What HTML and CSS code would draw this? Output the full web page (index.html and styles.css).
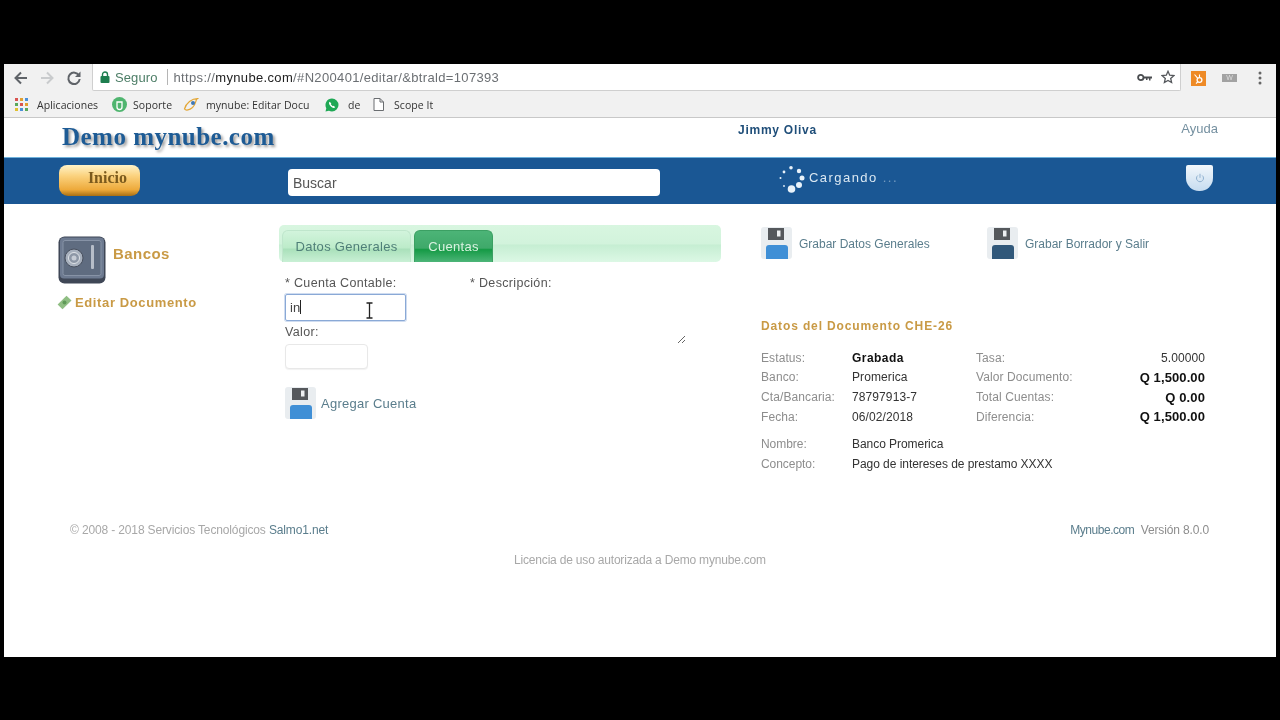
FILE: index.html
```html
<!DOCTYPE html>
<html lang="es">
<head>
<meta charset="utf-8">
<title>mynube: Editar Documento</title>
<link rel="stylesheet" href="styles.css">
</head>
<body>
<svg class="defs" width="0" height="0" aria-hidden="true">
  <symbol id="floppy" viewBox="0 0 31 32">
    <path d="M3 0h25a3 3 0 0 1 3 3v26a3 3 0 0 1-3 3H3a3 3 0 0 1-3-3V3a3 3 0 0 1 3-3z" fill="#e9edf0"/>
    <path d="M7 1h16v12H7z" fill="#55585c"/>
    <path d="M16 3.500h3.500v6H16z" fill="#eef0f2"/>
    <path d="M5 32V21a3 3 0 0 1 3-3h16a3 3 0 0 1 3 3v11z" fill="currentColor"/>
  </symbol>
</svg>
<div class="window">
  <div class="toolbar">
    <svg class="tb-icon" width="16" height="16" viewBox="0 0 16 16"><path d="M14 8H3M8 2.500 2.500 8 8 13.500" fill="none" stroke="#5f6368" stroke-width="2"/></svg>
    <svg class="tb-icon fwd" width="16" height="16" viewBox="0 0 16 16"><path d="M2 8h11M8 2.500 13.500 8 8 13.500" fill="none" stroke="#c9cbcd" stroke-width="2"/></svg>
    <svg class="tb-icon reload" width="16" height="16" viewBox="0 0 16 16"><path d="M13 5.500A5.700 5.700 0 1 0 13.700 9" fill="none" stroke="#5f6368" stroke-width="2"/><path d="M14.500 1.500v5.500H9z" fill="#5f6368"/></svg>
    <div class="omnibox">
      <svg class="lock" width="10" height="12" viewBox="0 0 10 12"><path d="M2.500 5V3.500a2.500 2.500 0 0 1 5 0V5" fill="none" stroke="#1e7e4f" stroke-width="1.400"/><rect x="0.500" y="5" width="9" height="7" rx="1" fill="#1e7e4f"/></svg>
      <span class="secure">Seguro</span>
      <span class="sep"></span>
      <span class="url">https://<b>mynube.com</b>/#N200401/editar/&amp;btrald=107393</span>
      <svg class="key" width="15" height="9" viewBox="0 0 15 9"><circle cx="3.800" cy="4.500" r="2.700" fill="none" stroke="#4a4d50" stroke-width="1.800"/><path d="M6.500 3.500H15v2h-1.500v2H12v-2h-1.500v1.500H9V5.500H6.500z" fill="#4a4d50"/></svg>
      <svg class="star" width="14" height="14" viewBox="0 0 14 14"><path d="m7 1.300 1.700 3.900 4.200.4-3.200 2.800.9 4.100L7 10.400l-3.600 2.100.9-4.100L1.100 5.600l4.200-.4z" fill="none" stroke="#55585c" stroke-width="1.300"/></svg>
    </div>
    <svg class="ext-hub" width="15" height="15" viewBox="0 0 15 15"><rect width="15" height="15" fill="#ee8a26"/><circle cx="8.500" cy="9" r="2.400" fill="none" stroke="#fff" stroke-width="1.300"/><path d="M8.500 3.500v3M3.500 3.500l3.300 3.800M5 12.500l1.800-1.700" stroke="#fff" stroke-width="1.100"/></svg>
    <span class="ext-grey">W</span>
    <svg class="dots" width="4" height="14" viewBox="0 0 4 14"><circle cx="2" cy="2" r="1.500" fill="#666"/><circle cx="2" cy="7" r="1.500" fill="#666"/><circle cx="2" cy="12" r="1.500" fill="#666"/></svg>
  </div>
  <div class="bookmarks">
    <svg class="bm-apps" width="13" height="13" viewBox="0 0 13 13"><rect width="3" height="3" fill="#d9534f"/><rect x="5" width="3" height="3" fill="#e0a030"/><rect x="10" width="3" height="3" fill="#4a90d9"/><rect y="5" width="3" height="3" fill="#5aa85a"/><rect x="5" y="5" width="3" height="3" fill="#d9534f"/><rect x="10" y="5" width="3" height="3" fill="#e0a030"/><rect y="10" width="3" height="3" fill="#e0c030"/><rect x="5" y="10" width="3" height="3" fill="#4a90d9"/><rect x="10" y="10" width="3" height="3" fill="#5aa85a"/></svg>
    <span class="bm bm-aplic">Aplicaciones</span>
    <svg class="bm-ic soporte-ic" width="15" height="15" viewBox="0 0 15 15"><circle cx="7.500" cy="7.500" r="7.500" fill="#4fb56f"/><path d="M5 5h5v5a2.500 2.500 0 0 1-5 0z" fill="none" stroke="#fff" stroke-width="1.300"/></svg>
    <span class="bm bm-soporte">Soporte</span>
    <svg class="bm-ic orbit-ic" width="16" height="16" viewBox="0 0 16 16"><path d="M1.500 12C3 6 9 1.500 14.500 1.500 12 3 13.500 7 9.500 10.500 6.500 13 3 14 1.500 12z" fill="none" stroke="#e3a635" stroke-width="1.200"/><circle cx="10" cy="6" r="2" fill="#3f78b5"/></svg>
    <span class="bm bm-mynube">mynube: Editar Docu</span>
    <svg class="bm-ic wa-ic" width="14" height="14" viewBox="0 0 14 14"><path d="M7 .5a6.500 6.500 0 0 1 0 13 6.400 6.400 0 0 1-3-.7L.5 13.500l.8-3.300A6.500 6.500 0 0 1 7 .5z" fill="#1fa855"/><path d="M4.500 3.800c-1 1.200-.5 2.800 1.200 4.500s3.300 2.200 4.500 1l-1.500-1.500-1 .5L5.800 6.300l.5-1z" fill="#fff"/></svg>
    <span class="bm bm-de">de</span>
    <svg class="bm-ic doc-ic" width="11" height="13" viewBox="0 0 11 13"><path d="M1 .5h6l3.500 3.500v8.500H1zM7 .5V4h3.500" fill="#fff" stroke="#6a6d70"/></svg>
    <span class="bm bm-scope">Scope It</span>
  </div>

  <div class="page">
    <header class="head">
      <h1 class="logo">Demo mynube.com</h1>
      <span class="user">Jimmy Oliva</span>
      <a class="help">Ayuda</a>
    </header>
    <nav class="nav">
      <a class="home">Inicio</a>
      <input class="search" placeholder="Buscar">
      <div class="loading">
        <svg class="spinner" width="26" height="26" viewBox="0 0 26 26" fill="#e8f2fa">
          <circle cx="12.500" cy="23" r="3.800"/><circle cx="20" cy="19" r="3"/><circle cx="23" cy="12" r="2.500"/><circle cx="20" cy="5" r="2.200"/><circle cx="12" cy="1.800" r="1.800"/><circle cx="5" cy="6" r="1.400"/><circle cx="1.500" cy="12" r="1"/><circle cx="5" cy="20" r=".9"/>
        </svg>
        <span class="loading-text">Cargando <i>...</i></span>
      </div>
      <a class="power">
        <svg width="10" height="10" viewBox="0 0 10 10"><path d="M2.800 2.500a3.500 3.500 0 1 0 4.400 0M5 .8v4" fill="none" stroke="#8fb0cf" stroke-width="1"/></svg>
      </a>
    </nav>

    <main class="content">
      <aside class="side">
        <div class="module">
          <svg width="48" height="48" viewBox="0 0 48 48">
            <rect x="0.500" y="0.500" width="47" height="47" rx="6" fill="#3f4756"/>
            <rect x="2" y="1.500" width="44" height="41" rx="4" fill="#6d7a90"/>
            <rect x="5" y="4.500" width="38" height="35" rx="2" fill="#5f6c80" stroke="#8793a6"/>
            <circle cx="16" cy="22" r="9" fill="#a7b0bd" stroke="#48505e"/>
            <circle cx="16" cy="22" r="5.500" fill="#8d97a6" stroke="#dfe3e8"/>
            <circle cx="16" cy="22" r="2.500" fill="#c6ccd5"/>
            <rect x="33" y="9" width="3" height="24" rx="1" fill="#b6bdc8"/>
          </svg>
          <span class="module-name">Bancos</span>
        </div>
        <div class="crumb">
          <svg width="15" height="15" viewBox="0 0 15 15"><path d="M9.500.8 14.500 5.500 5.500 14.300.6 9.500z" fill="#8fbe83"/><circle cx="7.500" cy="7.500" r="2" fill="#5f9a58"/></svg>
          <span>Editar Documento</span>
        </div>
      </aside>

      <section class="work">
        <div class="tabs">
          <a class="tab">Datos Generales</a>
          <a class="tab active">Cuentas</a>
        </div>
        <div class="form">
          <div class="form-left">
            <label class="lbl">* Cuenta Contable:</label>
            <div class="field-focus">in<span class="caret"></span>
              <svg class="ibeam" width="9" height="17" viewBox="0 0 9 17"><path d="M1.500 1h6M4.500 1v15M1.500 16h6" fill="none" stroke="#222" stroke-width="1.300"/></svg>
            </div>
            <label class="lbl lbl-valor">Valor:</label>
            <input class="field-small">
            <a class="save add">
              <svg class="floppy blue" width="31" height="32"><use href="#floppy"/></svg>
              <span>Agregar Cuenta</span>
            </a>
          </div>
          <div class="form-right">
            <label class="lbl">* Descripción:</label>
            <textarea class="desc"></textarea>
          </div>
        </div>
      </section>

      <section class="info">
        <div class="actions">
          <a class="save act1">
            <svg class="floppy blue" width="31" height="32"><use href="#floppy"/></svg>
            <span>Grabar Datos Generales</span>
          </a>
          <a class="save">
            <svg class="floppy navy" width="31" height="32"><use href="#floppy"/></svg>
            <span>Grabar Borrador y Salir</span>
          </a>
        </div>
        <h2 class="doc-title">Datos del Documento CHE-26</h2>
        <div class="doc-grid">
          <span class="k">Estatus:</span><strong class="v status">Grabada</strong><span class="k">Tasa:</span><span class="v num">5.00000</span>
          <span class="k">Banco:</span><span class="v">Promerica</span><span class="k">Valor Documento:</span><strong class="v num">Q 1,500.00</strong>
          <span class="k">Cta/Bancaria:</span><span class="v">78797913-7</span><span class="k">Total Cuentas:</span><strong class="v num">Q 0.00</strong>
          <span class="k">Fecha:</span><span class="v">06/02/2018</span><span class="k">Diferencia:</span><strong class="v num">Q 1,500.00</strong>
        </div>
        <div class="doc-notes">
          <span class="k">Nombre:</span><span class="v">Banco Promerica</span>
          <span class="k">Concepto:</span><span class="v">Pago de intereses de prestamo XXXX</span>
        </div>
      </section>
    </main>

    <footer class="foot">
      <div class="foot-row">
        <span>© 2008 - 2018 Servicios Tecnológicos <a>Salmo1.net</a></span>
        <span><a class="brand">Mynube.com</a>&nbsp; Versión 8.0.0</span>
      </div>
      <div class="license">Licencia de uso autorizada a Demo mynube.com</div>
    </footer>
  </div>
</div>
</body>
</html>
```
FILE: styles.css
```css
* { box-sizing: border-box; }
html, body { margin: 0; height: 100%; background: #000; overflow: hidden; }
body { font-family: "Liberation Sans", Arial, sans-serif; font-size: 12px; color: #555; }
.defs { display: block; height: 0; }
a { color: inherit; text-decoration: none; }

.window {
  width: 1272px; height: 593px; margin: 64px 4px 0;
  display: flex; flex-direction: column; background: #fff;
  filter: blur(.4px);
}

/* browser chrome */
.toolbar {
  height: 28px; flex: none; display: flex; align-items: center;
  background: #f1f1f1; padding-left: 9px;
}
.tb-icon { flex: none; }
.fwd { margin-left: 10px; }
.reload { margin-left: 11px; }
.omnibox {
  width: 1089px; height: 27px; margin-left: 10px; flex: none; align-self: flex-start;
  display: flex; align-items: center; background: #fff;
  border: 1px solid #cfcfcf; border-top: 0; border-radius: 0 0 2px 2px;
  padding: 0 5px 0 7px; font-family: "Liberation Sans", Arial, sans-serif; font-size: 13px;
}
.secure { margin-left: 5px; color: #4d7e67; letter-spacing: .1px; }
.sep { width: 1px; height: 16px; background: #b5b5b5; margin: 0 6px 0 9px; }
.url { color: #6b6f73; letter-spacing: .34px; flex: 1; }
.url b { font-weight: 400; color: #222; }
.key { margin-right: 9px; }
.ext-hub { margin-left: 10px; flex: none; }
.ext-grey {
  width: 15px; height: 8px; margin-left: 16px; background: #a2a2a2; color: #ddd;
  font-size: 7px; line-height: 8px; text-align: center; flex: none;
}
.dots { margin-left: 21px; flex: none; }

.bookmarks {
  height: 26px; flex: none; display: flex; align-items: center;
  background: #f1f1f1; border-bottom: 1px solid #c8c8c8; padding-left: 11px;
  font-family: "Open Sans", "Liberation Sans", sans-serif; font-size: 10.500px; color: #333;
  letter-spacing: .05px;
}
.bm { white-space: nowrap; }
.bm-aplic { margin-left: 9px; width: 64px; }
.soporte-ic { margin-left: 11px; }
.bm-soporte { margin-left: 6px; width: 39px; }
.orbit-ic { margin-left: 11px; }
.bm-mynube { margin-left: 7px; width: 104px; overflow: hidden; }
.wa-ic { margin-left: 15px; }
.bm-de { margin-left: 9px; width: 12px; }
.doc-ic { margin-left: 13px; }
.bm-scope { margin-left: 10px; }

/* page */
.page { flex: 1; min-height: 0; display: flex; flex-direction: column; background: #fff; }
.head { height: 39px; flex: none; display: flex; padding-left: 58px; }
.logo {
  width: 676px; margin: 4px 0 0; font: 700 25px/30px "Liberation Serif", serif;
  color: #1d5b95; letter-spacing: .48px; text-shadow: 2px 2px 3px #9a9a9a;
}
.user { flex: 1; padding-top: 5px; font-size: 12px; font-weight: 700; color: #1f4e79; line-height: 14px; letter-spacing: .75px; }
.help { margin-right: 58px; padding-top: 3px; font-size: 13px; line-height: 15px; color: #7590a0; }

.nav {
  height: 47px; flex: none; display: flex; align-items: flex-start;
  background: #1a5794; border-top: 1px solid #6fb2dc;
}
.home {
  width: 81px; height: 31px; margin: 7px 0 0 55px; flex: none; border-radius: 8px 8px 9px 9px;
  background: linear-gradient(#fff3c8 0, #fbd27e 35%, #eda93a 80%, #a86f14 100%);
  font: 700 16px/25px "Liberation Serif", serif; color: #7b5a1d; text-align: right; padding-right: 13px;
}
.search {
  width: 372px; height: 27px; margin: 11px 0 0 148px; flex: none; border: 0; border-radius: 4px;
  background: #fff; padding: 0 5px; font: 14px "Liberation Sans", sans-serif;
}
.search::placeholder { color: #555; opacity: 1; }
.loading { display: flex; align-items: center; margin: 8px 0 0 119px; }
.spinner { overflow: visible; }
.loading-text { margin-left: 4px; font-size: 13px; color: #dbe8f2; letter-spacing: 1.450px; position: relative; top: -2px; }
.loading-text i { font-style: normal; opacity: .45; }
.power {
  width: 27px; height: 26px; margin: 7px 63px 0 auto; flex: none;
  display: flex; align-items: center; justify-content: center;
  background: linear-gradient(#f2f7fb, #c6dcf0); border-radius: 2px 2px 13px 13px;
}

.content { display: flex; padding: 21px 0 0 53px; flex: none; }
.side { width: 222px; flex: none; padding-top: 11px; }
.module { display: flex; padding-left: 1px; }
.module-name { margin: 9px 0 0 7px; font-size: 15px; line-height: 17px; font-weight: 700; color: #c99a45; letter-spacing: .45px; }
.crumb { display: flex; align-items: center; margin-top: 11px; }
.crumb span { margin-left: 3px; font-size: 13px; font-weight: 700; color: #c99a45; letter-spacing: .62px; }

.work { width: 442px; flex: none; }
.tabs {
  height: 37px; display: flex; align-items: flex-end; gap: 3px; padding-left: 3px;
  border-radius: 5px; background: linear-gradient(#d8f6e0, #d2f3dc 50%, #c6eed3 55%, #dcf8e5);
}
.tab {
  width: 129px; height: 32px; text-align: center; line-height: 31px; font-size: 13px; letter-spacing: .3px;
  color: #4f7f78; border: 1px solid #bfe6cc; border-bottom: 0; border-radius: 6px 6px 0 0;
  background: linear-gradient(#d2f4dc 0, #bcebc9 55%, #a9e0ba 58%, #c9f0d5 100%);
}
.tab.active {
  width: 79px; color: #d9f2e0; border-color: #3ba063;
  background: linear-gradient(#4cb477 0, #3fa96a 55%, #159a45 60%, #4db578 100%);
}

.form { display: flex; padding-left: 6px; }
.form-left { width: 185px; flex: none; padding-top: 14px; }
.form-right { padding-top: 14px; }
.lbl { display: block; font-size: 12.500px; line-height: 14px; color: #555; letter-spacing: .33px; }
.field-focus {
  position: relative; width: 121px; height: 27px; margin-top: 4px;
  border: 1px solid #8aa9d6; border-radius: 2px; box-shadow: 0 0 0 1px #cfdcf0;
  padding: 0 4px; font-size: 13px; line-height: 25px; color: #444;
}
.caret { display: inline-block; width: 1px; height: 14px; background: #222; vertical-align: -2px; }
.ibeam { position: absolute; left: 79px; top: 7px; }
.lbl-valor { margin-top: 4px; }
.field-small {
  display: block; width: 83px; height: 25px; margin-top: 5px;
  border: 1px solid #e8e8e8; border-radius: 4px; background: #fff; box-shadow: 0 1px 1px #f2f2f2;
}
.save { display: flex; align-items: center; color: #5a7d8c; }
.save span { margin-left: 7px; padding-top: 2px; }
.add { margin-top: 18px; }
.add span { margin-left: 5px; padding-top: 0; font-size: 13px; letter-spacing: .26px; }
.floppy { flex: none; }
.blue { color: #3f8fd6; }
.navy { color: #31587a; }
.desc {
  display: block; width: 216px; height: 50px; margin-top: 4px; border: 0; outline: 0;
  background: #fff; resize: both; font: 12px "Liberation Sans", sans-serif;
}

.info { width: 446px; flex: none; margin-left: 40px; padding-top: 2px; }
.actions { display: flex; }
.act1 { width: 226px; }
.doc-title { margin: 60px 0 0; font-size: 12px; line-height: 14px; font-weight: 700; color: #c99a45; letter-spacing: .87px; }
.doc-grid {
  display: grid; grid-template-columns: 91px 124px 1fr auto; grid-auto-rows: 19.670px;
  margin-top: 15px; width: 444px; align-items: center; letter-spacing: .1px;
}
.doc-notes {
  display: grid; grid-template-columns: 91px 1fr; grid-auto-rows: 20px;
  margin-top: 7px; align-items: center; letter-spacing: -.05px;
}
.k { color: #8d8d8d; }
.v { color: #333; }
.status { color: #111; letter-spacing: .45px; }
strong.num { color: #111; font-size: 13px; letter-spacing: .1px; }
.num { text-align: right; }

.foot { margin-top: 49px; color: #a8a8a8; font-size: 12px; line-height: 14px; letter-spacing: -.14px; }
.foot-row { display: flex; justify-content: space-between; padding: 0 67px 0 66px; }
.foot a { color: #5a7d8c; }
.foot .brand { letter-spacing: -.45px; }
.foot-row span:last-child { color: #8d8d8d; }
.license { margin-top: 16px; text-align: center; letter-spacing: -.19px; }
```
